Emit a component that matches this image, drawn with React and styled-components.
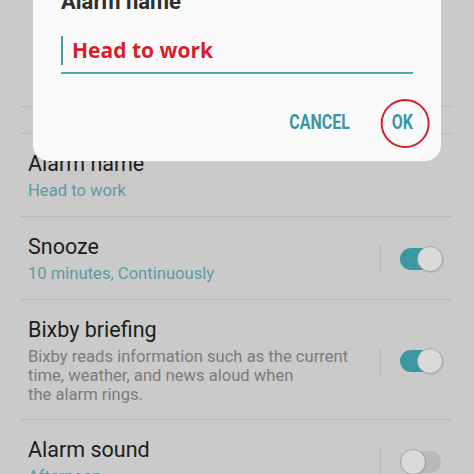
import styled, { createGlobalStyle } from "styled-components"

const GlobalStyle = createGlobalStyle`
    html, body {
        margin: 0;
        padding: 0;
        background-color: #cacaca;
    }
    * {
        box-sizing: border-box;
    }
`

const Screen = styled.div`
    position: relative;
    width: 474px;
    height: 474px;
    overflow: hidden;
    background-color: #cacaca;
    font-family: Roboto, "Noto Sans", sans-serif;
`

const List = styled.div`
    padding: 0 21px 0 20px;
`

const Spacer = styled.div`
    height: ${({ h }) => h}px;
    border-bottom: 1px solid #bababa;
`

const Row = styled.div`
    display: flex;
    align-items: center;
    padding: 17px 10px 15px 8px;
    border-bottom: 1px solid #bababa;
`

const Text = styled.div`
    flex: 1;
    display: flex;
    flex-direction: column;
    gap: 4px;
`

const Title = styled.div`
    font-size: 21.5px;
    line-height: 26px;
    color: #1c1c1c;
`

const Sub = styled.div`
    font-size: 16.6px;
    line-height: 20px;
    color: #5d9aa0;
`

const Desc = styled.div`
    font-size: 16.6px;
    line-height: 19px;
    color: #7b7b7b;
`

const Action = styled.div`
    display: flex;
    align-items: center;
    gap: 19px;
`

const Rule = styled.div`
    width: 1px;
    height: 28px;
    background-color: #b8b8b8;
`

const Switch = styled.div`
    position: relative;
    width: 43px;
    height: 26px;
    display: flex;
    align-items: center;
    justify-content: ${({ on }) => (on ? "flex-end" : "flex-start")};

    &::before {
        content: "";
        position: absolute;
        left: 0;
        right: 2px;
        top: 2px;
        bottom: 2px;
        border-radius: 11px;
        background-color: ${({ on }) => (on ? "#3a98a2" : "#b9b9b9")};
    }
`

const Knob = styled.div`
    position: relative;
    width: 26px;
    height: 26px;
    border-radius: 50%;
    background-color: #dadada;
    border: 1px solid #a3a3a3;
    box-shadow: 1px 1px 0 rgba(0, 0, 0, 0.08);
`

const Dialog = styled.div`
    position: absolute;
    top: -36px;
    left: 33px;
    width: 408px;
    padding: 24px 28px 16px;
    background-color: #fafafa;
    border-radius: 16px;
`

const DialogTitle = styled.div`
    font-size: 22px;
    line-height: 28px;
    font-weight: 700;
    color: #2e2e2e;
`

const Field = styled.div`
    display: flex;
    align-items: flex-start;
    gap: 9px;
    margin-top: 20px;
    height: 38px;
    border-bottom: 2px solid #4aa9ae;
`

const Caret = styled.div`
    width: 2px;
    height: 29px;
    background-color: #3f9ea5;
`

const Value = styled.div`
    font-family: "Open Sans", Roboto, sans-serif;
    font-size: 21px;
    line-height: 29px;
    font-weight: 700;
    color: #d61f2b;
`

const Buttons = styled.div`
    display: flex;
    justify-content: flex-end;
    align-items: center;
    gap: 37px;
    margin-top: 26px;
    height: 45px;
`

const Button = styled.div`
    position: relative;
    display: inline-block;
    font-size: 19.5px;
    line-height: 24px;
    font-weight: 700;
    color: #3a979f;
    transform: scaleX(0.82);
    transform-origin: right center;

    ${({ circled }) => circled && `
        &::after {
            content: "";
            position: absolute;
            left: 50%;
            top: 50%;
            width: 45px;
            height: 45px;
            margin: -24px 0 0 -21px;
            border: 2.5px solid #d0222d;
            border-radius: 50%;
            transform: scaleX(1.22);
        }
    `}
`

const Toggle = ({ on }) => (
    <Action>
        <Rule />
        <Switch on={on}>
            <Knob />
        </Switch>
    </Action>
)

const App = () => {
    return (
        <Screen>
            <GlobalStyle />
            <List>
                <Spacer h={107} />
                <Spacer h={27} />
                <Row>
                    <Text>
                        <Title>Alarm name</Title>
                        <Sub>Head to work</Sub>
                    </Text>
                </Row>
                <Row>
                    <Text>
                        <Title>Snooze</Title>
                        <Sub>10 minutes, Continuously</Sub>
                    </Text>
                    <Toggle on />
                </Row>
                <Row>
                    <Text>
                        <Title>Bixby briefing</Title>
                        <Desc>
                            Bixby reads information such as the current<br />
                            time, weather, and news aloud when<br />
                            the alarm rings.
                        </Desc>
                    </Text>
                    <Toggle on />
                </Row>
                <Row>
                    <Text>
                        <Title>Alarm sound</Title>
                        <Sub>Afternoon</Sub>
                    </Text>
                    <Toggle />
                </Row>
            </List>
            <Dialog>
                <DialogTitle>Alarm name</DialogTitle>
                <Field>
                    <Caret />
                    <Value>Head to work</Value>
                </Field>
                <Buttons>
                    <Button>CANCEL</Button>
                    <Button circled>OK</Button>
                </Buttons>
            </Dialog>
        </Screen>
    )
}

export default App
